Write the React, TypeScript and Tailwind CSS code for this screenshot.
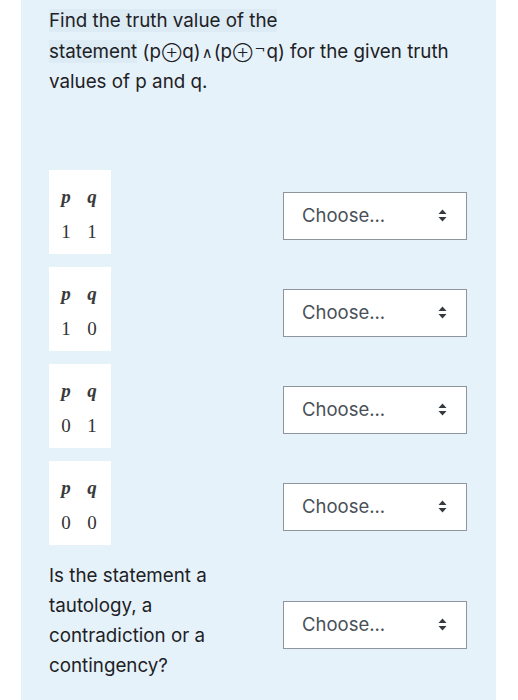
import { ChangeEvent, useState } from "react";

const rows = [
  ["1", "1"],
  ["1", "0"],
  ["0", "1"],
  ["0", "0"],
];

const font = { fontFamily: '"Inter", "Noto Sans", sans-serif' };
const symbol = { fontFamily: '"DejaVu Sans", sans-serif' };

function ChooseSelect() {
  const [value, setValue] = useState("");
  return (
    <div className="relative w-[184px] h-[48px] shrink-0">
      <select
        value={value}
        onChange={(event: ChangeEvent<HTMLSelectElement>) => setValue(event.target.value)}
        className="h-full w-full appearance-none rounded-none border border-[#8f959e] bg-white pl-[18px] pr-10 text-[18.5px] text-[#495057] outline-none"
        style={font}
      >
        <option value="">Choose...</option>
        <option value="T">True</option>
        <option value="F">False</option>
      </select>
      <svg
        className="pointer-events-none absolute right-[20px] top-[17px]"
        width="9"
        height="13"
        viewBox="0 0 9 13"
      >
        <path d="M4.5 0.5 L8.5 5 L0.5 5 Z" fill="#343a40" />
        <path d="M0.5 8 L8.5 8 L4.5 12.5 Z" fill="#343a40" />
      </svg>
    </div>
  );
}

function TruthBox({ p, q }: { p: string; q: string }) {
  return (
    <div className="h-[84px] w-[62px] shrink-0 bg-white pl-[4px] pt-[9px] text-[#333]">
      <div
        className="grid w-[52px] grid-cols-2 text-center text-[19px] leading-[35px]"
        style={{ fontFamily: '"Liberation Serif", "DejaVu Serif", serif' }}
      >
        <span className="italic font-semibold text-[#3a3a3a]">p</span>
        <span className="italic font-semibold text-[#3a3a3a]">q</span>
        <span>{p}</span>
        <span>{q}</span>
      </div>
    </div>
  );
}

function Oplus() {
  return <span className="mx-[1px] text-[14px] leading-none">⊕</span>;
}

export default function App() {
  return (
    <div className="min-h-screen bg-white text-[#1d2125]" style={font}>
      <div className="ml-[21px] min-h-[700px] w-[475px] bg-[#e6f2fa] pl-[28px] pr-[29px] pt-[6px]">
        <p className="text-[18.8px] leading-[30.5px]">
          <span className="bg-[#dcebf4]">Find the truth value of the</span>
          <br />
          <span className="bg-[#dcebf4]">statement</span> (p<Oplus />q)
          <span className="mx-[1px] text-[15px] leading-none" style={symbol}>∧</span>(p<Oplus />
          <span className="relative -top-[5px] mx-[1px] text-[13px] leading-none" style={symbol}>¬</span>q) for the given truth
          <br />
          values of p and q.
        </p>

        <div className="mt-[72px] flex flex-col gap-[13px]">
          {rows.map(([p, q], i) => (
            <div key={i} className="flex items-start justify-between">
              <TruthBox p={p} q={q} />
              <div className="mt-[22px]">
                <ChooseSelect />
              </div>
            </div>
          ))}
        </div>

        <div className="mt-[16px] flex items-start justify-between pb-4">
          <p className="w-[185px] text-[18.8px] leading-[30px]">
            Is the statement a tautology, a contradiction or a contingency?
          </p>
          <div className="mt-[40px]">
            <ChooseSelect />
          </div>
        </div>
      </div>
    </div>
  );
}
